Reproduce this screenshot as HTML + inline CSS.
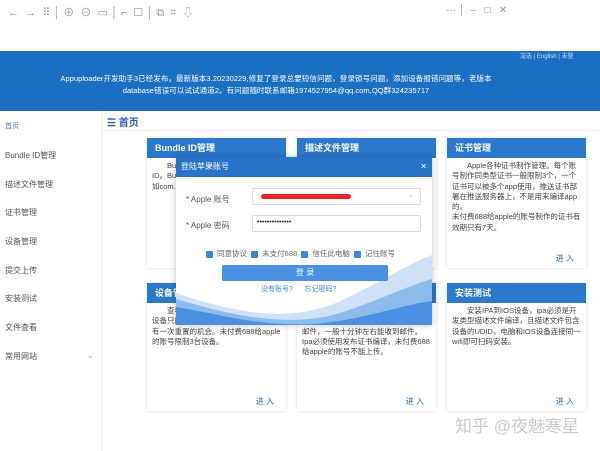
<!DOCTYPE html>
<html><head><meta charset="utf-8"><style>
*{margin:0;padding:0;box-sizing:border-box}
body{width:600px;height:449px;overflow:hidden;background:#fff;font-family:"Liberation Sans","Noto Sans CJK SC",sans-serif;position:relative;color:#333}
.a{position:absolute}
.tb{color:#999;font-size:11px;top:4px}
.hdr{left:0;top:51px;width:600px;height:60px;background:#1a6fc2}
.side div{position:absolute;left:5px;font-size:8px;color:#555}
.card{position:absolute;width:139px;background:#fff;box-shadow:0 0 3px rgba(0,0,0,.15)}
.card h3{background:#2b78cc;color:#fff;font-size:9px;height:20px;line-height:20px;padding-left:8px}
.card p{font-size:7.5px;line-height:10.3px;padding:3px 5px;color:#444;text-indent:2em}
.card .go{position:absolute;right:12px;bottom:4px;font-size:8px;color:#2b6cb0}
.lbl{font-size:8px;color:#555}
.cb{display:inline-block;width:7px;height:7px;background:#3d87dc;border-radius:1px;vertical-align:middle;margin-right:4px}
</style></head><body>
<div class="a tb" style="left:8px">← &nbsp;→ &nbsp;⠿ │ ⊕ &nbsp;⊖ &nbsp;▭ │ ⌐ &nbsp;☐ │ ⧉ &nbsp;⌗ &nbsp;⇩</div>
<div class="a tb" style="left:446px;top:5px;font-size:10px">··· │ &nbsp;– &nbsp;&nbsp;□ &nbsp;&nbsp;✕</div>
<div class="a hdr"></div>
<div class="a" style="left:520px;top:51px;font-size:6px;color:#cfe0f5">渲选 | English | 未登</div>
<div class="a" style="left:0;top:73px;width:552px;text-align:center;font-size:7.6px;color:#fff;line-height:12px">Appuploader开发助手3已经发布，最新版本3.20230229,修复了登录总要短信问题，登录锁号问题，添加设备报错问题等，老版本<br>database错误可以试试通道2。有问题随时联系邮箱1974527954@qq.com,QQ群324235717</div>
<div class="a" style="left:101px;top:111px;width:1px;height:340px;background:#eee"></div>
<div class="side">
<div style="top:121px;color:#3d87dc;font-size:7px">首页</div>
<div style="top:150px">Bundle ID管理</div>
<div style="top:179px">描述文件管理</div>
<div style="top:207px">证书管理</div>
<div style="top:236px">设备管理</div>
<div style="top:265px">提交上传</div>
<div style="top:293px">安装测试</div>
<div style="top:322px">文件查看</div>
<div style="top:351px">常用网站<span style="position:absolute;left:82px;color:#aaa">⌄</span></div>
</div>
<div class="a" style="left:107px;top:114px;font-size:10px;color:#2a5da8;font-weight:bold">☰ 首页</div>
<div class="a" style="left:102px;top:130px;width:498px;height:1px;background:#eee"></div>

<div class="card" style="left:147px;top:138px;height:130px"><h3>Bundle ID管理</h3><p>Bundle ID管理个app-id，个app-ID。Bundle ID能和其他相同，一般例如com.</p></div>
<div class="card" style="left:297px;top:138px;height:130px"><h3>描述文件管理</h3></div>
<div class="card" style="left:447px;top:138px;height:130px"><h3>证书管理</h3><p>Apple各种证书制作管理。每个账号制作同类型证书一般限制3个，一个证书可以被多个app使用，推送证书部署在推送服务器上，不是用来编译app的。<br>未付费688给apple的账号制作的证书有效期只有7天。</p><span class="go">进 入</span></div>
<div class="card" style="left:147px;top:283px;height:128px"><h3>设备管理</h3><p>查看账号限制3台设备，账号限制设备只能增加，不能删除，每年续费后有一次重置的机会。未付费688给apple的账号限制3台设备。</p><span class="go">进 入</span></div>
<div class="card" style="left:297px;top:283px;height:128px"><h3>提交上传</h3><p>上传ipa到itunes connect，上传后请登录（苹果邮箱）查看apple的反馈邮件，一般十分钟左右能收到邮件。<br>Ipa必须使用发布证书编译，未付费688给apple的账号不能上传。</p><span class="go">进 入</span></div>
<div class="card" style="left:447px;top:283px;height:128px"><h3>安装测试</h3><p>安装IPA到IOS设备，ipa必须是开发类型描述文件编译，且描述文件包含设备的UDID，电脑和IOS设备连接同一wifi即可扫码安装。</p><span class="go">进 入</span></div>

<div class="a" style="left:176px;top:157px;width:256px;height:168px;background:#fff;box-shadow:0 0 6px rgba(0,0,0,.25);overflow:hidden">
<div style="height:20px;background:#2773c8;color:#fff;font-size:8px;line-height:20px;padding-left:5px">登陆苹果账号<span style="position:absolute;right:5px">✕</span></div>
<div class="a lbl" style="left:10px;top:37px">* Apple 账号</div>
<div class="a" style="left:76px;top:31px;width:169px;height:17px;border:1px solid #ddd;border-radius:2px"><div style="position:absolute;left:8px;top:5px;width:90px;height:5px;background:#e22;border-radius:3px"></div><span style="position:absolute;right:6px;top:2px;font-size:7px;color:#bbb">⌄</span></div>
<div class="a lbl" style="left:10px;top:63px">* Apple 密码</div>
<div class="a" style="left:76px;top:58px;width:169px;height:17px;border:1px solid #ddd;border-radius:2px;font-size:7px;padding:3px 4px">••••••••••••••</div>
<div class="a lbl" style="left:30px;top:91px;font-size:7.5px;color:#666"><span class="cb"></span>同意协议 &nbsp;<span class="cb"></span>未支付688 &nbsp;<span class="cb"></span>信任此电脑 &nbsp;<span class="cb"></span>记住账号</div>
<svg class="a" style="left:0;top:98px" width="256" height="70" viewBox="0 0 256 70"><path d="M0 38 C60 58 110 68 160 48 C200 30 230 10 256 0 L256 70 L0 70Z" fill="#cfe1f7"/><path d="M0 44 C60 62 120 74 170 56 C210 42 235 30 256 24 L256 70 L0 70Z" fill="#8dbbec"/><path d="M0 52 C40 58 80 72 140 69 C190 64 225 50 256 46 L256 70 L0 70Z" fill="#4a90e2"/></svg>
<div class="a" style="left:46px;top:108px;width:166px;height:16px;background:#4a90e2;border-radius:2px;color:#fff;font-size:8px;text-align:center;line-height:16px">登 录</div>
<div class="a" style="left:85px;top:127px;font-size:7px;color:#3d87dc">没有账号? &nbsp;&nbsp;&nbsp;&nbsp;&nbsp;忘记密码?</div>
</div>
<div class="a" style="left:455px;top:412px;font-size:17px;color:#ccc">知乎 @夜魅寒星</div>
</body></html>
